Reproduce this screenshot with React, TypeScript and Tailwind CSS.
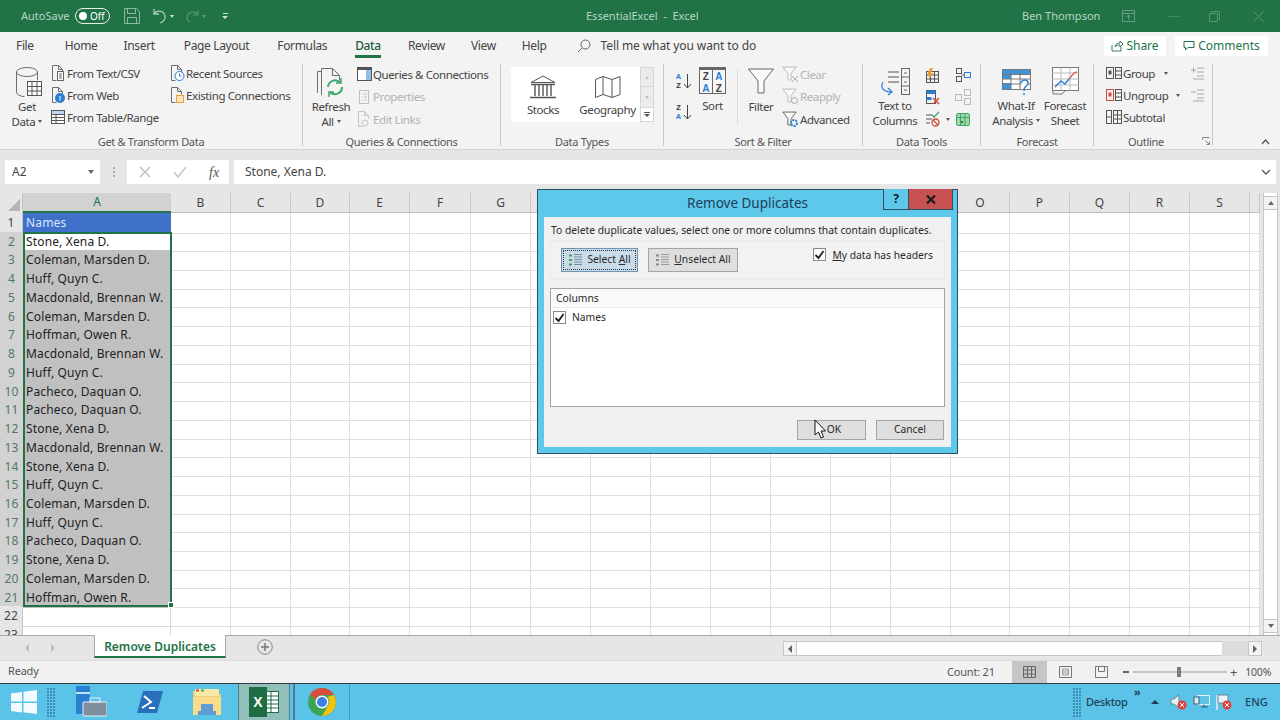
import type { ReactNode } from "react";

const names = [
  "Stone, Xena D.",
  "Coleman, Marsden D.",
  "Huff, Quyn C.",
  "Macdonald, Brennan W.",
  "Coleman, Marsden D.",
  "Hoffman, Owen R.",
  "Macdonald, Brennan W.",
  "Huff, Quyn C.",
  "Pacheco, Daquan O.",
  "Pacheco, Daquan O.",
  "Stone, Xena D.",
  "Macdonald, Brennan W.",
  "Stone, Xena D.",
  "Huff, Quyn C.",
  "Coleman, Marsden D.",
  "Huff, Quyn C.",
  "Pacheco, Daquan O.",
  "Stone, Xena D.",
  "Coleman, Marsden D.",
  "Hoffman, Owen R.",
];

// H to N sit behind the dialog
const columns = ["A", "B", "C", "D", "E", "F", "G", "", "", "", "", "", "", "", "O", "P", "Q", "R", "S", ""];
const gridCols =
  "grid grid-cols-[23px_148px_60px_60px_59px_60px_61px_60px_60px_60px_60px_60px_60px_60px_60px_59px_60px_60px_60px_60px_10px]";

function Svg({ w, h, children }: { w: number; h: number; children: ReactNode }) {
  return (
    <svg width={w} height={h} viewBox={`0 0 ${w} ${h}`} fill="none" className="shrink-0">
      {children}
    </svg>
  );
}

function Doc({ stroke = "#6e6e6e", children }: { stroke?: string; children?: ReactNode }) {
  return (
    <Svg w={16} h={18}>
      <path d="M2.5 16.5V1.5h6l4 4v3M8.5 1.5v4h4" stroke={stroke} />
      <path d="M2.5 16.5h4" stroke={stroke} />
      {children}
    </Svg>
  );
}

function GetDataIcon() {
  return (
    <Svg w={30} h={34}>
      <ellipse cx="13" cy="6" rx="10.5" ry="4.5" stroke="#6e6e6e" fill="#f3f3f3" />
      <path d="M2.5 6v20c0 2.5 4 4.5 8 4.5M23.5 6v8" stroke="#6e6e6e" />
      <rect x="13.5" y="15.5" width="14" height="14" fill="#fff" stroke="#555" />
      <path d="M13.5 20.5h14M13.5 25h14M18 15.5v14M23 15.5v14" stroke="#555" />
    </Svg>
  );
}

function TableIcon() {
  return (
    <Svg w={16} h={16}>
      <rect x="1.5" y="1.5" width="13" height="13" fill="#fff" stroke="#555" />
      <rect x="2" y="2" width="12" height="3" fill="#bcd6ee" />
      <path d="M1.5 5.5h13M1.5 8.5h13M1.5 11.5h13M6 5.5v9" stroke="#555" />
    </Svg>
  );
}

function RefreshIcon() {
  return (
    <Svg w={32} h={34}>
      <path d="M2.5 27V5.5h4M6.5 29V2.5h11l7 7v5M17.5 2.5v7h7" stroke="#6e6e6e" fill="none" />
      <path d="M13 21a7 7 0 0 1 12-4.5M27 21a7 7 0 0 1-12 5" stroke="#3aa76d" strokeWidth="2" />
      <path d="M26 12v5h-5M14 31v-5h5" stroke="#3aa76d" strokeWidth="1.5" />
    </Svg>
  );
}

function ConnectionsIcon() {
  return (
    <Svg w={16} h={16}>
      <rect x="1.5" y="1.5" width="14" height="13" fill="#fff" stroke="#555" />
      <rect x="1.5" y="1.5" width="14" height="2.5" fill="#555" />
      <rect x="10" y="4" width="5" height="10" fill="#8fc0ea" />
    </Svg>
  );
}

function StocksIcon() {
  return (
    <Svg w={28} h={24}>
      <path d="M14 1 2 7.5h24z" stroke="#555" fill="#fff" />
      <path d="M2 9.5h24M3 22.5h22M1 22.5h26" stroke="#555" strokeWidth="1.3" />
      <path d="M6 10v11M10 10v11M14 10v11M18 10v11M22 10v11" stroke="#555" strokeWidth="1.4" />
    </Svg>
  );
}

function MapIcon() {
  return (
    <Svg w={28} h={24}>
      <path d="M1.5 4.5 9 1.5l9 3 8-3v18l-8 3-9-3-7.5 3zM9 1.5v18M18 4.5v18" stroke="#555" />
    </Svg>
  );
}

function SortAzIcon({ down }: { down?: boolean }) {
  return (
    <div className="flex w-[17px] h-[18px]">
      <div className="w-[7px] flex flex-col text-[7.5px] leading-[8.7px] font-bold tracking-normal text-center font-['Liberation_Sans',sans-serif]">
        <span className={down ? "text-[#333]" : "text-[#2b7cd3]"}>{down ? "Z" : "A"}</span>
        <span className={down ? "text-[#2b7cd3]" : "text-[#333]"}>{down ? "A" : "Z"}</span>
      </div>
      <svg width="9" height="16" viewBox="0 0 9 16" fill="none" className="ml-[1px]">
        <path d="M4.500 1v14M1 11l3.500 4L8 11" stroke="#444" />
      </svg>
    </div>
  );
}

function SortIcon() {
  return (
    <div className="w-[27px] h-[27px] border border-[#666] border-t-[3px] flex text-[10px] leading-[11.500px] font-bold text-center bg-[#f7f7f7] tracking-normal font-['Liberation_Sans',sans-serif]">
      <div className="w-1/2 pt-[1px] border-r border-[#666]">
        <div className="text-[#444]">Z</div>
        <div className="text-[#2b7cd3]">A</div>
      </div>
      <div className="w-1/2 pt-[1px]">
        <div className="text-[#2b7cd3]">A</div>
        <div className="text-[#444]">Z</div>
      </div>
    </div>
  );
}

function Funnel({ w = 28, h = 28, stroke = "#666" }: { w?: number; h?: number; stroke?: string }) {
  return (
    <svg width={w} height={h} viewBox="0 0 28 28" fill="none" className="shrink-0">
      <path d="M1.5 2h25L17 14v12h-6V14z" stroke={stroke} fill="#f9f9f9" strokeWidth={w < 20 ? 1.8 : 1} />
    </svg>
  );
}

function SmallFunnel({ kind }: { kind: "clear" | "reapply" | "advanced" }) {
  const stroke = kind === "advanced" ? "#666" : "#bbb";
  return (
    <div className="relative w-[17px] h-[17px]">
      <Funnel w={15} h={15} stroke={stroke} />
      {kind === "clear" && (
        <svg width="8" height="8" viewBox="0 0 8 8" className="absolute right-0 bottom-0" fill="none">
          <path d="M1 1l6 6M7 1 1 7" stroke="#aaa" />
        </svg>
      )}
      {kind === "reapply" && (
        <svg width="9" height="9" viewBox="0 0 9 9" className="absolute right-0 bottom-0" fill="none">
          <circle cx="4.5" cy="4.5" r="3" stroke="#aaa" />
        </svg>
      )}
      {kind === "advanced" && (
        <svg width="10" height="10" viewBox="0 0 10 10" className="absolute right-0 bottom-0" fill="none">
          <circle cx="5" cy="5" r="3" stroke="#2b7cd3" strokeWidth="2" strokeDasharray="2 1" />
        </svg>
      )}
    </div>
  );
}

function TextToColumnsIcon() {
  return (
    <Svg w={30} h={29}>
      <path d="M8 5h11M8 10h11M8 15h11" stroke="#555" />
      <rect x="21.5" y="1.5" width="8" height="26" stroke="#666" />
      <path d="M21.5 10h8M21.5 19h8M24 6h3M24 15h3M24 23h3" stroke="#666" />
      <path d="M3 15c-3 5 0 10 8 10M8 21l4 4-4 3" stroke="#2b7cd3" strokeWidth="1.2" />
    </Svg>
  );
}

function ToolIcon({ kind }: { kind: number }) {
  if (kind === 0)
    return (
      <Svg w={15} h={16}>
        <rect x="1.5" y="4.5" width="12" height="11" stroke="#555" />
        <path d="M1.5 8h12M1.5 12h12M5.5 4.5v11M9.5 4.5v11" stroke="#555" />
        <path d="M5 1 2 8h2.5L3.5 12l5-6H6l2-5z" fill="#f0a030" />
      </Svg>
    );
  if (kind === 1)
    return (
      <Svg w={15} h={16}>
        <rect x="1.5" y="1.5" width="9" height="13" stroke="#555" />
        <rect x="1.5" y="1.5" width="9" height="3.5" fill="#2b7cd3" />
        <rect x="1.5" y="8" width="5" height="3" fill="#2b7cd3" />
        <path d="M8 9l6 6M14 9l-6 6" stroke="#d04a3a" strokeWidth="1.5" />
      </Svg>
    );
  if (kind === 2)
    return (
      <Svg w={15} h={16}>
        <path d="M1 4h6M1 8h6M1 12h4" stroke="#555" />
        <path d="M7 4l2 2 5-5" stroke="#3aa76d" strokeWidth="1.4" />
        <circle cx="10.5" cy="11.5" r="3.5" stroke="#d04a3a" strokeWidth="1.3" />
        <path d="M8 9l5 5" stroke="#d04a3a" strokeWidth="1.3" />
      </Svg>
    );
  if (kind === 3)
    return (
      <Svg w={16} h={16}>
        <rect x="1.5" y="1.5" width="5" height="5" stroke="#555" />
        <rect x="1.5" y="9.5" width="5" height="5" stroke="#555" />
        <path d="M6.5 8h3" stroke="#555" />
        <rect x="9.5" y="5.5" width="6" height="5" stroke="#2b7cd3" />
      </Svg>
    );
  if (kind === 4)
    return (
      <Svg w={16} h={16}>
        <rect x="0.5" y="5.5" width="6" height="6" stroke="#bbb" />
        <rect x="9.5" y="0.5" width="6" height="6" stroke="#bbb" />
        <rect x="9.5" y="9.5" width="6" height="6" stroke="#bbb" />
      </Svg>
    );
  return (
    <Svg w={16} h={16}>
      <rect x="1.5" y="2.5" width="13" height="12" rx="1.5" fill="#a5d6a7" stroke="#3aa76d" />
      <path d="M1.5 6.5h13M5.5 2.5v12M10 2.5v12" stroke="#3aa76d" />
      <circle cx="7" cy="11" r="1.2" fill="#2f7d4c" />
    </Svg>
  );
}

function WhatIfIcon() {
  return (
    <Svg w={29} h={26}>
      <rect x="0.5" y="0.5" width="28" height="20" fill="#fff" stroke="#777" />
      <rect x="1" y="1" width="27" height="4" fill="#3d96dc" />
      <rect x="1" y="5" width="8" height="5" fill="#3d96dc" />
      <rect x="1" y="14" width="8" height="6" fill="#3d96dc" />
      <path d="M.5 5.5h28M.5 10h28M.5 15h28M9 .5v20M18 .5v20" stroke="#777" />
      <path d="M19 14c1-4 7-4 7 0 0 3-4 3-4 7v1M22 24v2" stroke="#2b7cd3" strokeWidth="1.4" fill="#fff" />
    </Svg>
  );
}

function ForecastIcon() {
  return (
    <Svg w={28} h={28}>
      <rect x="0.5" y="0.5" width="26" height="23" fill="#fff" stroke="#777" />
      <path d="M.5 6h26M.5 12h26M.5 18h26M9 .5v23M18 .5v23" stroke="#bbb" />
      <path d="M3 20l6-6 4 3 4-5" stroke="#2b7cd3" strokeWidth="1.4" />
      <path d="M17 12l5-6 3-1" stroke="#e0605a" strokeWidth="1.4" />
      <path d="M1 24v3h9l3-3" stroke="#777" />
    </Svg>
  );
}

function OutlineIcon({ kind }: { kind: "group" | "ungroup" | "subtotal" }) {
  if (kind === "subtotal")
    return (
      <Svg w={16} h={16}>
        <rect x="0.5" y="1.5" width="5" height="13" stroke="#555" />
        <rect x="7.5" y="1.5" width="8" height="13" stroke="#555" />
        <path d="M7.5 6h8M7.5 10h8M11.5 1.5v13M.5 8h5" stroke="#555" />
      </Svg>
    );
  const c = kind === "group" ? "#555" : "#d04a3a";
  return (
    <Svg w={16} h={16}>
      <rect x="0.5" y="2.5" width="7" height="11" stroke={c} />
      <rect x="2.5" y="5.5" width="3" height="4" fill={c} />
      <rect x="9.5" y="2.5" width="6" height="11" stroke="#555" />
      <path d="M9.5 6h6M9.5 10h6" stroke="#555" />
    </Svg>
  );
}

function OutlineRight({ plus }: { plus?: boolean }) {
  return (
    <Svg w={15} h={14}>
      <path d={plus ? "M1 4h5M3.5 1.5v5" : "M1 4h5"} stroke="#aaa" />
      <path d="M7 2h7M7 6h7M7 10h7M3 13h11" stroke="#aaa" />
    </Svg>
  );
}

function Caret() {
  return <span className="inline-block ml-[3px] mb-[2px] w-0 h-0 border-x-[2.5px] border-x-transparent border-t-[3px] border-t-[#555] align-middle" />;
}

function SmallBtn({ icon, label, off, children }: { icon: ReactNode; label: string; off?: boolean; children?: ReactNode }) {
  return (
    <div className="flex items-center h-[18px] gap-[1px] whitespace-nowrap">
      <div className="w-[17px] flex justify-center shrink-0">{icon}</div>
      <span className={off ? "text-[#b2b2b2]" : "text-[#444]"}>{label}</span>
      {children}
    </div>
  );
}

function Group({ className, labelClass, label, children }: { className: string; labelClass?: string; label: string; children: ReactNode }) {
  return (
    <div className={`${className} h-full flex flex-col border-r border-[#c6c6c6] shrink-0`}>
      <div className="h-[68px] flex">{children}</div>
      <div className={`h-[14px] leading-[20px] text-[11px] tracking-[-0.3px] text-center text-[#555] whitespace-nowrap ${labelClass ?? ""}`}>{label}</div>
    </div>
  );
}

function TitleBar() {
  return (
    <div className="h-[32px] bg-[#217346] flex items-center text-[11px] text-[#b7d3c3] shrink-0 pl-[21px]">
      <span className="w-[54px]">AutoSave</span>
      <div className="w-[35px] h-[16px] rounded-full border border-[#e6f0ea] flex items-center pl-[3px] gap-[3px]">
        <span className="w-[8px] h-[8px] rounded-full bg-white" />
        <span className="text-[10px] text-white leading-none">Off</span>
      </div>
      <svg width="16" height="16" viewBox="0 0 16 16" fill="none" className="ml-[14px] shrink-0">
        <path d="M.5.5h12l3 3v12H.5zM3.5.5v5h8v-5M3.5 15.5v-6h9v6" stroke="#8fb8a2" />
      </svg>
      <svg width="16" height="16" viewBox="0 0 16 16" fill="none" className="ml-[12px] shrink-0">
        <path d="M2 1v5h5M2 6c3-5 11-3 11 3 0 3-2 5-5 6" stroke="#a8c9b6" strokeWidth="1.3" />
      </svg>
      <span className="ml-[2px] w-0 h-0 border-x-[2.5px] border-x-transparent border-t-[3px] border-t-[#cfe2d7]" />
      <svg width="16" height="14" viewBox="0 0 16 14" fill="none" className="ml-[10px] opacity-40 shrink-0">
        <path d="M14 1v5H9M14 6C11 1 3 3 3 9c0 2 1 3 3 4" stroke="#a8c9b6" strokeWidth="1.2" />
      </svg>
      <span className="ml-[2px] w-0 h-0 border-x-[2.5px] border-x-transparent border-t-[3px] border-t-[#5f9b7c]" />
      <div className="ml-[16px] flex flex-col items-center gap-[2px]">
        <span className="w-[5px] h-px bg-[#cfe2d7]" />
        <span className="w-0 h-0 border-x-[3px] border-x-transparent border-t-[3px] border-t-[#cfe2d7]" />
      </div>
      <span className="ml-[358px] w-[106px] shrink-0 text-center whitespace-pre">EssentialExcel  -  Excel</span>
      <span className="ml-[330px] w-[76px] shrink-0 whitespace-nowrap">Ben Thompson</span>
      <svg width="13" height="12" viewBox="0 0 13 12" fill="none" className="ml-[24px] opacity-50 shrink-0">
        <path d="M.5.5h12v11H.5zM.5 3.5h12M6.5 10V5M4.500 7l2-2 2 2" stroke="#a8c9b6" />
      </svg>
      <span className="ml-[33px] w-[12px] h-px bg-[#3f8c64] shrink-0" />
      <svg width="11" height="11" viewBox="0 0 11 11" fill="none" className="ml-[29px] opacity-40 shrink-0">
        <path d="M.5 2.500h8v8h-8zM2.500 2.500v-2h8v8h-2" stroke="#a8c9b6" />
      </svg>
      <svg width="11" height="11" viewBox="0 0 11 11" fill="none" className="ml-[33px] opacity-40 shrink-0">
        <path d="M.5.5l10 10M10.500.5l-10 10" stroke="#a8c9b6" />
      </svg>
    </div>
  );
}

function TabsRow() {
  const tabs = [
    { t: "File", c: "ml-[16px]" },
    { t: "Home", c: "ml-[31px]" },
    { t: "Insert", c: "ml-[26px]" },
    { t: "Page Layout", c: "ml-[29px]" },
    { t: "Formulas", c: "ml-[28px]" },
  ];
  return (
    <div className="h-[28px] bg-[#f3f3f3] flex items-center text-[12px] text-[#444] shrink-0 relative tracking-[-0.35px]">
      {tabs.map((t) => (
        <span key={t.t} className={`${t.c} whitespace-nowrap`}>
          {t.t}
        </span>
      ))}
      <span className="ml-[28px] h-full flex flex-col justify-center relative font-medium text-[#1e5c3c]">
        Data
        <span className="absolute left-0 right-0 bottom-[2px] h-[3px] bg-[#217346]" />
      </span>
      <span className="ml-[27px]">Review</span>
      <span className="ml-[26px]">View</span>
      <span className="ml-[26px]">Help</span>
      <svg width="14" height="14" viewBox="0 0 14 14" fill="none" className="ml-[30px]">
        <circle cx="8.500" cy="5.500" r="4.500" stroke="#666" />
        <path d="M5 9l-4 4" stroke="#666" />
      </svg>
      <span className="ml-[10px] whitespace-nowrap tracking-[-0.1px]">Tell me what you want to do</span>
      <div className="ml-auto flex gap-[9px] pr-[12px] tracking-normal">
        <div className="w-[62px] h-[20px] bg-white flex items-center justify-center gap-[3px] text-[#217346]">
          <svg width="12" height="12" viewBox="0 0 12 12" fill="none">
            <path d="M1 5v6h9V7M4 7c0-3 3-4 5-4V1l3 3-3 3V5C7 5 5 5 4 7z" stroke="#217346" strokeWidth=".9" />
          </svg>
          Share
        </div>
        <div className="w-[93px] h-[20px] bg-white flex items-center justify-center gap-[3px] text-[#217346]">
          <svg width="12" height="12" viewBox="0 0 12 12" fill="none">
            <path d="M1 1.500h10v6H5L2.500 10V7.500H1z" stroke="#217346" />
          </svg>
          Comments
        </div>
      </div>
    </div>
  );
}

function Ribbon() {
  return (
    <div className="h-[90px] bg-[#f3f3f3] border-b border-[#d5d5d5] pt-[4px] shrink-0">
      <div className="h-[82px] flex text-[11.5px] leading-[15px] text-[#444] tracking-[-0.4px]">
        <Group className="w-[303px]" label="Get & Transform Data">
          <div className="ml-[10px] w-[34px] flex flex-col items-center pt-[2px] text-center">
            <div className="h-[33px] ml-[3px]"><GetDataIcon /></div>
            <div>Get</div>
            <div className="whitespace-nowrap">Data<Caret /></div>
          </div>
          <div className="ml-[5px] w-[119px] flex flex-col gap-[4px]">
            <SmallBtn icon={<Doc><rect x="7.500" y="7.500" width="6" height="9" fill="#fff" stroke="#666" /><path d="M9 10h3M9 12h3M9 14h3" stroke="#666" /></Doc>} label="From Text/CSV" />
            <SmallBtn icon={<Doc><circle cx="10" cy="12" r="5" fill="#2b7cd3" /><rect x="9.500" y="10" width="1" height="4.500" fill="#fff" /></Doc>} label="From Web" />
            <SmallBtn icon={<TableIcon />} label="From Table/Range" />
          </div>
          <div className="flex flex-col gap-[4px]">
            <SmallBtn icon={<Doc><circle cx="10.500" cy="12" r="4.500" fill="#fff" stroke="#2b7cd3" /><path d="M10.500 9.500V12h2" stroke="#2b7cd3" /></Doc>} label="Recent Sources" />
            <SmallBtn icon={<Doc><rect x="7.500" y="9.500" width="7" height="7" fill="#fbe3bd" stroke="#e8a33d" /></Doc>} label="Existing Connections" />
          </div>
        </Group>

        <Group className="w-[198px]" label="Queries & Connections">
          <div className="ml-[8px] w-[40px] flex flex-col items-center pt-[2px] text-center">
            <div className="h-[33px]"><RefreshIcon /></div>
            <div>Refresh</div>
            <div className="whitespace-nowrap">All<Caret /></div>
          </div>
          <div className="ml-[4px] pt-[1px] flex flex-col gap-[4.500px]">
            <SmallBtn icon={<ConnectionsIcon />} label="Queries & Connections" />
            <SmallBtn off icon={<Svg w={12} h={16}><rect x="1.500" y="1.500" width="9" height="13" stroke="#c0c0c0" /><path d="M3.500 5h1M6 5h3M3.500 8h1M6 8h3M3.500 11h1M6 11h3" stroke="#c0c0c0" /></Svg>} label="Properties" />
            <SmallBtn off icon={<Doc stroke="#c4c4c4"><circle cx="9" cy="13" r="3" stroke="#c4c4c4" /></Doc>} label="Edit Links" />
          </div>
        </Group>

        <Group className="w-[163px]" label="Data Types">
          <div className="ml-[10px] mt-[3px] h-[55px] flex">
            <div className="w-[129px] bg-white flex text-center">
              <div className="w-[64px] pt-[8px] flex flex-col items-center">
                <StocksIcon />
                <div className="leading-[22px]">Stocks</div>
              </div>
              <div className="w-[65px] pt-[8px] flex flex-col items-center">
                <MapIcon />
                <div className="leading-[22px]">Geography</div>
              </div>
            </div>
            <div className="w-[14px] flex flex-col bg-white border border-[#d6d6d6]">
              <div className="h-[19px] border-b border-[#d6d6d6] bg-[#ececec] flex items-center justify-center">
                <span className="w-0 h-0 border-x-[2.5px] border-x-transparent border-b-[3px] border-b-[#c0c0c0]" />
              </div>
              <div className="h-[21px] border-b border-[#d6d6d6] bg-[#ececec] flex items-center justify-center">
                <span className="w-0 h-0 border-x-[2.5px] border-x-transparent border-t-[3px] border-t-[#c0c0c0]" />
              </div>
              <div className="flex-1 flex flex-col items-center justify-center gap-[1px]">
                <span className="w-[6px] h-px bg-[#555]" />
                <span className="w-0 h-0 border-x-[3px] border-x-transparent border-t-[3px] border-t-[#555]" />
              </div>
            </div>
          </div>
        </Group>

        <Group className="w-[199px]" label="Sort & Filter">
          <div className="ml-[11px] w-[17px] pt-[9px] flex flex-col gap-[13px]">
            <SortAzIcon />
            <SortAzIcon down />
          </div>
          <div className="ml-[7px] w-[27px] pt-[3px] flex flex-col items-center">
            <SortIcon />
            <div className="leading-[24px]">Sort</div>
          </div>
          <div className="ml-[11px] mt-[6px] w-px h-[55px] bg-[#dcdcdc]" />
          <div className="ml-[9px] w-[28px] pt-[3px] flex flex-col items-center">
            <Funnel />
            <div className="leading-[24px]">Filter</div>
          </div>
          <div className="ml-[7px] pt-[1px] flex flex-col gap-[4.500px]">
            <SmallBtn off icon={<SmallFunnel kind="clear" />} label="Clear" />
            <SmallBtn off icon={<SmallFunnel kind="reapply" />} label="Reapply" />
            <SmallBtn icon={<SmallFunnel kind="advanced" />} label="Advanced" />
          </div>
        </Group>

        <Group className="w-[118px]" label="Data Tools">
          <div className="ml-[5px] w-[54px] pt-[3px] flex flex-col items-center text-center">
            <div className="h-[28px]"><TextToColumnsIcon /></div>
            <div className="mt-[3px]">Text to</div>
            <div>Columns</div>
          </div>
          <div className="ml-[3px] pt-[3px] w-[15px] flex flex-col gap-[6px]">
            <ToolIcon kind={0} />
            <ToolIcon kind={1} />
            <ToolIcon kind={2} />
          </div>
          <div className="ml-[3px] self-end mb-[5px] w-[6px]"><Caret /></div>
          <div className="ml-[6px] pt-[3px] w-[16px] flex flex-col gap-[6px]">
            <ToolIcon kind={3} />
            <ToolIcon kind={4} />
            <ToolIcon kind={5} />
          </div>
        </Group>

        <Group className="w-[113px]" label="Forecast">
          <div className="ml-[10px] w-[50px] pt-[5px] flex flex-col items-center text-center">
            <div className="h-[26px]"><WhatIfIcon /></div>
            <div className="mt-[3px]">What-If</div>
            <div className="whitespace-nowrap">Analysis<Caret /></div>
          </div>
          <div className="ml-[3px] w-[42px] pt-[3px] flex flex-col items-center text-center">
            <div className="h-[28px] ml-[2px]"><ForecastIcon /></div>
            <div className="mt-[3px]">Forecast</div>
            <div>Sheet</div>
          </div>
        </Group>

        <div className="relative">
          <Group className="w-[119px]" labelClass="pr-[14px]" label="Outline">
            <div className="ml-[11px] w-[85px] flex flex-col gap-[4px]">
              <SmallBtn icon={<OutlineIcon kind="group" />} label="Group"><span className="ml-[5px]"><Caret /></span></SmallBtn>
              <SmallBtn icon={<OutlineIcon kind="ungroup" />} label="Ungroup"><span className="ml-[4px]"><Caret /></span></SmallBtn>
              <SmallBtn icon={<OutlineIcon kind="subtotal" />} label="Subtotal" />
            </div>
            <div className="flex flex-col gap-[8px] pt-[2px]">
              <OutlineRight plus />
              <OutlineRight />
            </div>
          </Group>
          <svg width="8" height="8" viewBox="0 0 8 8" fill="none" className="absolute right-[3px] bottom-[1px]">
            <path d="M.5 3V.5h7M3.500 3.500l4 4M4.500 7.500h3v-3" stroke="#888" />
          </svg>
        </div>
        <div className="flex-1 flex items-end justify-end pr-[10px] pb-[1px]">
          <svg width="9" height="6" viewBox="0 0 9 6" fill="none">
            <path d="M1 5l3.500-4L8 5" stroke="#555" strokeWidth="1.2" />
          </svg>
        </div>
      </div>
    </div>
  );
}

function FormulaBar() {
  return (
    <div className="h-[43px] bg-[#e6e6e6] pt-[10px] shrink-0">
      <div className="h-[24px] flex text-[12px] text-[#444]">
        <div className="ml-[5px] w-[95px] bg-white flex items-center pl-[7px] pr-[6px] justify-between">
          A2
          <span className="w-0 h-0 border-x-[3.500px] border-x-transparent border-t-[4px] border-t-[#666]" />
        </div>
        <div className="ml-[13px] w-[3px] flex flex-col justify-center gap-[2px]">
          <span className="h-[2px] w-[2px] bg-[#aaa]" />
          <span className="h-[2px] w-[2px] bg-[#aaa]" />
          <span className="h-[2px] w-[2px] bg-[#aaa]" />
        </div>
        <div className="ml-[11px] w-[102px] bg-white flex items-center">
          <svg width="12" height="12" viewBox="0 0 12 12" fill="none" className="ml-[12px]">
            <path d="M1 1l10 10M11 1 1 11" stroke="#bdbdbd" strokeWidth="1.4" />
          </svg>
          <svg width="14" height="12" viewBox="0 0 14 12" fill="none" className="ml-[22px]">
            <path d="M1 6l4 5 8-10" stroke="#c9c9c9" strokeWidth="1.600" />
          </svg>
          <span className="ml-[22px] font-['Liberation_Serif',serif] italic text-[14px] text-[#555]">fx</span>
        </div>
        <div className="ml-[5px] w-[1042px] bg-white flex items-center pl-[11px] justify-between pr-[5px]">
          Stone, Xena D.
          <svg width="10" height="6" viewBox="0 0 10 6" fill="none">
            <path d="M1 1l4 4 4-4" stroke="#555" strokeWidth="1.300" />
          </svg>
        </div>
      </div>
    </div>
  );
}

function Sheet() {
  const rows = Array.from({ length: 23 }, (_, i) => i + 1);
  return (
    <div className="h-[442px] flex bg-[#e6e6e6] shrink-0">
      <div className="relative w-[1260px] overflow-hidden bg-white">
        <div className={`${gridCols} h-[20px] bg-[#e6e6e6] text-[12px] text-[#444]`}>
          <div className="flex items-end justify-end p-[2px] bg-[#e6e6e6] border-r border-[#c6c6c6]">
            <span className="w-0 h-0 border-l-[12px] border-l-transparent border-b-[12px] border-b-[#b5b5b5]" />
          </div>
          {columns.map((c, i) => (
            <div
              key={i}
              className={
                i === 0
                  ? "flex items-center justify-center bg-[#d2d2d2] text-[#217346] border-b-[2px] border-[#217346]"
                  : "flex items-center justify-center border-r border-[#c6c6c6] border-b border-b-[#bdbdbd]"
              }
            >
              {c}
            </div>
          ))}
        </div>
        {rows.map((r) => (
          <div key={r} className={`${gridCols} h-[18.74px] text-[12px] leading-[19.500px] tracking-[0.15px]`}>
            <div
              className={
                r === 1 || r >= 22
                  ? "bg-[#e6e6e6] text-center text-[#444] border-r border-[#c6c6c6] border-b border-b-[#d4d4d4]"
                  : "bg-[#d2d2d2] text-center text-[#4f7a63] border-b border-b-[#c0c0c0]"
              }
            >
              {r}
            </div>
            <div
              className={
                r === 1
                  ? "bg-[#3f70ca] text-[#dbe7ff] pl-[3px]"
                  : r === 2
                    ? "bg-white text-[#222] pl-[3px]"
                    : r <= 21
                      ? "bg-[#c0c0c0] text-[#222] pl-[3px] whitespace-nowrap"
                      : "border-r border-b border-[#d8d8d8]"
              }
            >
              {r === 1 ? "Names" : r <= 21 ? names[r - 2] : ""}
            </div>
            {columns.slice(1).map((_, i) => (
              <div key={i} className="border-r border-b border-[#dedede]" />
            ))}
          </div>
        ))}
        <div className="absolute left-[23px] top-[38.500px] w-[149px] h-[375px] border-2 border-[#217346] pointer-events-none" />
        <div className="absolute left-[168px] top-[409px] w-[6px] h-[6px] bg-[#217346] border border-white" />
      </div>
      <div className="ml-[3px] w-[15px] h-full bg-white border-x border-[#c6c6c6] flex flex-col justify-between">
        <div className="mt-[3px] h-[14px] bg-[#f3f3f3] border-y border-[#c6c6c6] flex items-center justify-center">
          <span className="w-0 h-0 border-x-[3.500px] border-x-transparent border-b-[4px] border-b-[#666]" />
        </div>
        <div className="mb-[2px] h-[14px] bg-[#f3f3f3] border-y border-[#c6c6c6] flex items-center justify-center">
          <span className="w-0 h-0 border-x-[3.500px] border-x-transparent border-t-[4px] border-t-[#666]" />
        </div>
      </div>
    </div>
  );
}

function SheetTabs() {
  return (
    <div className="h-[25px] bg-[#e6e6e6] border-t border-[#a8a8a8] flex shrink-0">
      <div className="w-[94px] flex items-center">
        <span className="ml-[25px] w-0 h-0 border-y-[4px] border-y-transparent border-r-[4px] border-r-[#bdbdbd]" />
        <span className="ml-[22px] w-0 h-0 border-y-[4px] border-y-transparent border-l-[4px] border-l-[#bdbdbd]" />
      </div>
      <div className="w-[132px] h-[23px] -mt-px pt-[2px] bg-white border-x border-[#a8a8a8] border-b-2 border-b-[#217346] flex items-center justify-center text-[12px] font-semibold text-[#217346]">
        Remove Duplicates
      </div>
      <svg width="16" height="16" viewBox="0 0 16 16" fill="none" className="ml-[31px] mt-[3px]">
        <circle cx="8" cy="8" r="7.300" stroke="#888" />
        <path d="M8 4v8M4 8h8" stroke="#777" strokeWidth="1.500" />
      </svg>
      <div className="ml-[510px] mt-[5px] h-[15px] w-[479px] flex items-stretch">
        <div className="w-[14px] bg-[#f3f3f3] border border-[#c6c6c6] flex items-center justify-center">
          <span className="w-0 h-0 border-y-[4px] border-y-transparent border-r-[4px] border-r-[#666]" />
        </div>
        <div className="w-[425px] bg-white border-y border-[#c6c6c6]" />
        <div className="w-[26px] bg-[#dcdcdc]" />
        <div className="w-[14px] bg-[#f3f3f3] border border-[#c6c6c6] flex items-center justify-center">
          <span className="w-0 h-0 border-y-[4px] border-y-transparent border-l-[4px] border-l-[#666]" />
        </div>
      </div>
    </div>
  );
}

function StatusBar() {
  return (
    <div className="h-[23px] bg-[#f1f1f1] flex items-center text-[11px] leading-[18px] text-[#555] pl-[8px] border-t border-[#dcdcdc] shrink-0 tracking-[-0.2px]">
      <span className="w-[30px] shrink-0 -mt-[2px]">Ready</span>
      <span className="ml-[909px] w-[47px] shrink-0 whitespace-nowrap">Count: 21</span>
      <div className="ml-[18px] w-[35px] h-full bg-[#c6c6c6] flex items-center justify-center shrink-0">
        <svg width="13" height="12" viewBox="0 0 13 12" fill="none">
          <path d="M.5.5h12v11H.5zM.5 4h12M.5 8h12M4.500.5v11M8.500.5v11" stroke="#666" />
        </svg>
      </div>
      <svg width="13" height="12" viewBox="0 0 13 12" fill="none" className="ml-[12px] shrink-0">
        <path d="M.5.500h12v11H.5z" stroke="#777" />
        <path d="M3.500 3h6v6h-6zM3.500 5h6M3.500 7h6" stroke="#999" />
      </svg>
      <svg width="13" height="12" viewBox="0 0 13 12" fill="none" className="ml-[23px] shrink-0">
        <path d="M.5.500h12v11H.5zM3.500.5v5h6v-5" stroke="#777" />
      </svg>
      <span className="ml-[15px] w-[6px] h-[2px] bg-[#666] shrink-0" />
      <div className="ml-[4px] w-[94px] h-[2px] bg-[#c4c4c4] relative shrink-0">
        <span className="absolute left-[44px] -top-[4px] w-[4px] h-[10px] bg-[#7a7a7a]" />
      </div>
      <span className="ml-[3px] text-[13px] leading-none text-[#555]">+</span>
      <span className="ml-[8px] text-[10.500px]">100%</span>
    </div>
  );
}

function Dots() {
  return (
    <div className="grid grid-cols-3 gap-[1px] w-[8px] shrink-0">
      {Array.from({ length: 30 }, (_, i) => (
        <span key={i} className="w-[2px] h-[2px] bg-[#3a8fb0]" />
      ))}
    </div>
  );
}

function Taskbar() {
  return (
    <div className="h-[38px] bg-[#5bc3e8] border-y border-[#2f3b40] flex items-center shrink-0 text-[#1f4258] text-[11px]">
      <svg width="26" height="24" viewBox="0 0 26 24" className="ml-[11px] shrink-0" fill="#f2fbff">
        <path d="M0 3.500 11 2v9.500H0zM12.500 1.800 26 0v11.500H12.500zM0 13h11v9.500L0 21zM12.500 13H26v11l-13.500-1.800z" />
      </svg>
      <div className="ml-[10px]"><Dots /></div>
      <svg width="32" height="32" viewBox="0 0 32 32" className="ml-[20px] shrink-0">
        <rect x="1" y="0" width="14" height="28" fill="#2a7fd0" />
        <rect x="1" y="6" width="14" height="2" fill="#bfe3f7" />
        <rect x="8" y="16" width="24" height="14" rx="1" fill="#7f8f9d" stroke="#e9eef2" />
        <rect x="15" y="12" width="10" height="4" fill="none" stroke="#e9eef2" />
      </svg>
      <svg width="26" height="24" viewBox="0 0 26 24" className="ml-[30px] shrink-0">
        <path d="M6 1h20l-6 22H0z" fill="#2a6fbd" />
        <path d="M7 6l7 6-9 6" stroke="#fff" strokeWidth="2" fill="none" />
        <path d="M12 18h6" stroke="#fff" strokeWidth="2" />
      </svg>
      <svg width="30" height="28" viewBox="0 0 30 28" className="ml-[29px] shrink-0">
        <path d="M1 3h11l2 3h15v21H1z" fill="#f3cf73" />
        <rect x="3" y="1" width="24" height="7" fill="#fbe9a8" />
        <rect x="4" y="1.500" width="3" height="2" fill="#d94c3d" />
        <rect x="9" y="1.500" width="3" height="2" fill="#5aa84f" />
        <rect x="1" y="9" width="28" height="18" fill="#f7dc8c" />
        <path d="M9 23v-7h12v7M6 27v-4h18v4z" fill="#5e9dd6" />
      </svg>
      <div className="ml-[16px] w-[52px] h-full bg-[#93bfbb] border-x border-[#4f7d8a] flex items-center justify-center shrink-0">
        <div className="relative w-[30px] h-[30px]">
          <svg width="14" height="22" viewBox="0 0 14 22" className="absolute left-[16px] top-[4px]">
            <rect x="0" y="0.500" width="13.500" height="21" fill="#fff" stroke="#1f6d42" />
            <path d="M0 5h14M0 9h14M0 13h14M0 17h14M6 .5v21" stroke="#1f6d42" />
          </svg>
          <div className="absolute left-0 top-0 w-[18px] h-[30px] bg-[#1f6d42] text-white font-bold text-[14px] flex items-center justify-center font-['Liberation_Sans',sans-serif]">X</div>
        </div>
      </div>
      <div className="ml-[3px] w-[2px] h-full bg-[#4f7d8a] shrink-0" />
      <div className="w-[55px] h-full border-r border-[#3f9cc0] flex items-center justify-center shrink-0">
        <svg width="28" height="28" viewBox="0 0 28 28">
          <circle cx="14" cy="14" r="14" fill="#3aa655" />
          <path d="M14 0a14 14 0 0 1 12.100 7H14a7 7 0 0 0-6.500 4.500L2 6.500A14 14 0 0 1 14 0z" fill="#dd4b3e" />
          <path d="M26.100 7A14 14 0 0 1 14 28l6-10.500A7 7 0 0 0 19.500 9z" fill="#f4c20d" />
          <circle cx="14" cy="14" r="6.500" fill="#fff" />
          <circle cx="14" cy="14" r="5" fill="#3b7de0" />
        </svg>
      </div>
      <div className="ml-[723px]"><Dots /></div>
      <span className="ml-[5px] w-[40px] shrink-0 font-medium tracking-[-0.3px]">Desktop</span>
      <span className="ml-[8px] -mt-[20px] w-[7px] shrink-0 text-[11px] font-bold">»</span>
      <span className="ml-[10px] w-0 h-0 border-x-[4px] border-x-transparent border-b-[4px] border-b-[#1f3d50] shrink-0" />
      <svg width="17" height="16" viewBox="0 0 17 16" className="ml-[11px] shrink-0">
        <path d="M1 5h3l5-4v13L4 10H1z" fill="#e8f2f7" stroke="#6d8693" />
        <circle cx="12" cy="11" r="4.500" fill="#e0413a" />
        <path d="M10 9l4 4M14 9l-4 4" stroke="#fff" />
      </svg>
      <svg width="17" height="16" viewBox="0 0 17 16" fill="none" className="ml-[6px] shrink-0">
        <rect x="4.500" y="1.500" width="12" height="9" stroke="#e8f2f7" />
        <rect x="1" y="3" width="5" height="7" stroke="#3c6173" fill="#dbeaf2" />
        <path d="M8 13h7M11 10.500V13" stroke="#3c6173" />
      </svg>
      <svg width="17" height="16" viewBox="0 0 17 16" className="ml-[5px] shrink-0">
        <path d="M2 1v15" stroke="#e8f2f7" strokeWidth="1.500" />
        <path d="M3 1h10v8H3z" fill="#e8f2f7" stroke="#6d8693" />
        <circle cx="12" cy="11" r="4.500" fill="#e0413a" />
        <path d="M10 9l4 4M14 9l-4 4" stroke="#fff" />
      </svg>
      <span className="ml-[13px] font-medium shrink-0">ENG</span>
    </div>
  );
}

function Check() {
  return (
    <div className="w-[13px] h-[13px] bg-white border border-[#8a8a8a] flex items-center justify-center shrink-0">
      <svg width="11" height="10" viewBox="0 0 11 10" fill="none">
        <path d="M1.500 5l3 3 5-7" stroke="#222" strokeWidth="1.800" />
      </svg>
    </div>
  );
}

function ListIcon({ color, dim }: { color: string; dim: string }) {
  return (
    <svg width="14" height="14" viewBox="0 0 14 14" fill="none">
      <path d="M1 2.500h3M1 7h3M1 11.500h3" stroke={color} strokeWidth="2" />
      <path d="M6 1.500h8M6 4h8M6 6.500h8M6 9h8M6 11.500h8" stroke={dim} />
    </svg>
  );
}

function Dialog() {
  return (
    <div className="absolute left-[537px] top-[189px] w-[421px] h-[265px] bg-[#5dc8ea] border border-[#2f4f5f] flex flex-col font-['Noto_Sans',sans-serif]">
      <div className="h-[27px] flex items-start relative shrink-0">
        <div className="flex-1 h-[26px] text-center text-[13.500px] leading-[26px] text-[#1e3f57]">Remove Duplicates</div>
        <div className="absolute right-[4px] top-[-1px] flex h-[21px]">
          <div className="w-[26px] bg-[#5dc8ea] border border-t-0 border-[#2f4f5f] text-center text-[12px] font-bold leading-[19px] text-[#14222b]">?</div>
          <div className="w-[44px] bg-[#c75050] border-b border-r border-[#2f4f5f] flex items-center justify-center">
            <svg width="10" height="9" viewBox="0 0 10 9" fill="none">
              <path d="M1 .500l8 8M9 .500l-8 8" stroke="#1c1c1c" strokeWidth="2.200" />
            </svg>
          </div>
        </div>
      </div>
      <div className="mx-[6px] mb-[6px] flex-1 bg-[#f0f0f0] px-[6px] text-[10.300px] text-[#2a2a2a] flex flex-col relative">
        <div className="h-[24px] pl-px leading-[26px] whitespace-nowrap">To delete duplicate values, select one or more columns that contain duplicates.</div>
        <div className="h-[38px] bg-[#f3f3f3] border border-[#e8e8e8] flex pl-[10px] pt-[6px] pr-[11px]">
          <div className="w-[77px] h-[24px] bg-[#c9dcec] border border-[#6f93b3] outline-1 -outline-offset-3 outline-dotted outline-[#333] flex items-center justify-center gap-[5px]">
            <ListIcon color="#48a04c" dim="#7a8a96" />
            <span>Select <u>A</u>ll</span>
          </div>
          <div className="ml-[10px] w-[90px] h-[24px] bg-[#dedede] border border-[#a5a5a5] flex items-center justify-center gap-[5px]">
            <ListIcon color="#8a8a8a" dim="#9a9a9a" />
            <span><u>U</u>nselect All</span>
          </div>
          <div className="ml-auto flex gap-[6px] items-start h-[14px]">
            <Check />
            <span className="leading-[14px] whitespace-nowrap"><u>M</u>y data has headers</span>
          </div>
        </div>
        <div className="mt-[9px] h-[119px] bg-white border border-[#a3a3a3]">
          <div className="h-[19px] bg-[#fafafa] border-b border-[#eeeeee] pl-[5px] leading-[19px]">Columns</div>
          <div className="flex items-center h-[19px] pl-[2px] gap-[6px]">
            <Check />
            <span>Names</span>
          </div>
        </div>
        <div className="mt-[13px] mr-px flex justify-end gap-[10px]">
          <div className="w-[69px] h-[20px] bg-[#dedede] border border-[#a5a5a5] flex items-center justify-center pl-[5px]">OK</div>
          <div className="w-[68px] h-[20px] bg-[#dedede] border border-[#a5a5a5] flex items-center justify-center">Cancel</div>
        </div>
      </div>
    </div>
  );
}

function Cursor() {
  return (
    <svg width="13" height="20" viewBox="0 0 13 20" className="absolute left-[814px] top-[419px]">
      <path d="M1 1v15l3.500-3 2.500 6 2.500-1-2.500-6h4.500z" fill="#fff" stroke="#111" strokeWidth="1" />
    </svg>
  );
}

export default function App() {
  return (
    <div className="relative w-[1280px] h-[720px] overflow-hidden flex flex-col bg-[#e6e6e6] font-['Noto_Sans',sans-serif]">
      <TitleBar />
      <TabsRow />
      <Ribbon />
      <FormulaBar />
      <Sheet />
      <SheetTabs />
      <StatusBar />
      <Taskbar />
      <Dialog />
      <Cursor />
    </div>
  );
}
